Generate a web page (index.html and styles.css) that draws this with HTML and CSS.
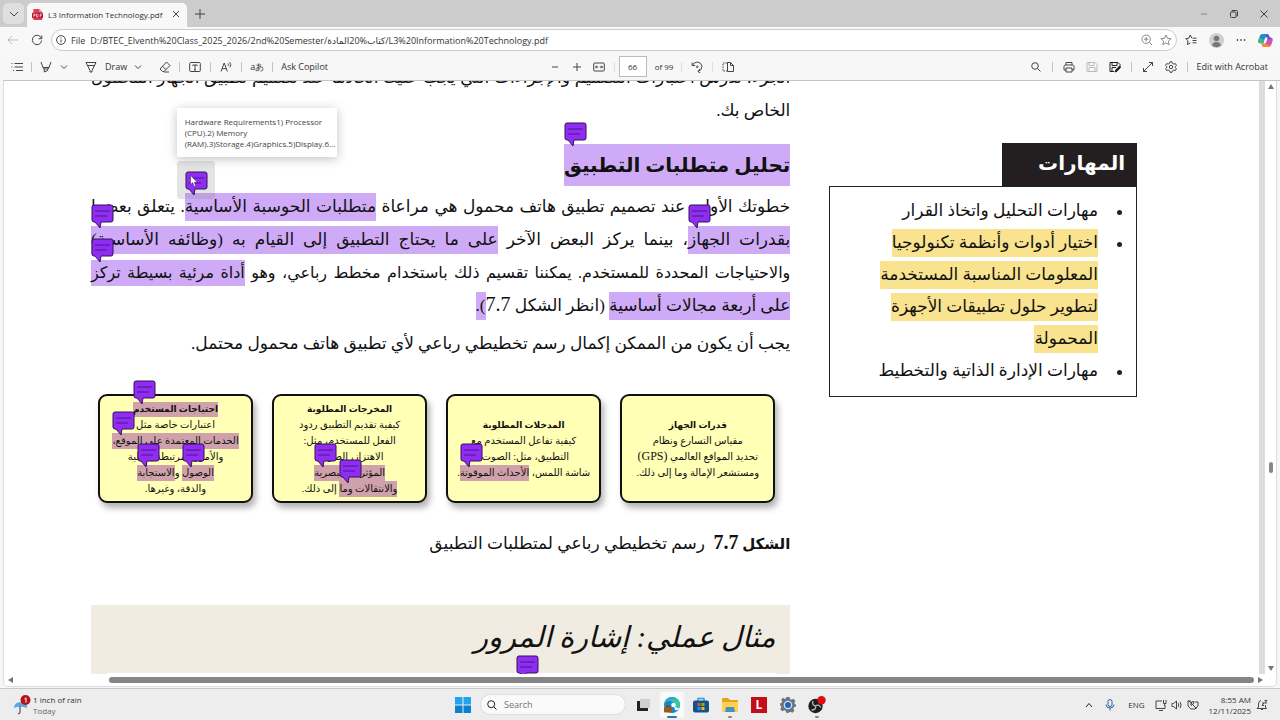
FILE: index.html
```html
<!DOCTYPE html>
<html lang="en">
<head>
<meta charset="utf-8">
<title>L3 Information Technology.pdf</title>
<link rel="stylesheet" href="styles.css">
</head>
<body>
<svg class="defs" aria-hidden="true">
  <symbol id="note" viewBox="0 0 23 26">
    <path d="M3 1h17q2 0 2 2v13q0 2-2 2H10l-1 6-5-6H3q-2 0-2-2V3q0-2 2-2z" fill="#8f2df0" stroke="#35105e" stroke-width="1"/>
    <path d="M4 7h15M4 12h12" stroke="#4d1590" stroke-width="1"/>
  </symbol>
  <symbol id="chev" viewBox="0 0 8 8"><path d="M1 2.5l3 3 3-3"/></symbol>
</svg>
<div class="window">
  <header class="tabs">
    <button class="tabmenu" aria-label="Tab actions"><svg class="ic s10" viewBox="0 0 10 10"><path d="M1 3l4 4 4-4"/></svg></button>
    <div class="tab">
      <svg class="pdficon" viewBox="0 0 12 12"><path d="M1.500 0h6.500l3 3v9h-9.500z" fill="#d94452"/><path d="M8 0l3 3H8z" fill="#f3b6bb"/><rect y="4" width="12" height="6" rx="1" fill="#b8132a"/><path d="M2 9V5.500h1.500v1.500H2M5 5.500V9q2 0 2-1.700T5 5.500M9 9V5.500h2M9 7h1.500" fill="none" stroke="#fff" stroke-width=".7"/></svg>
      <span class="tabtitle">L3 Information Technology.pdf</span>
      <button aria-label="Close tab"><svg class="ic s8" viewBox="0 0 8 8"><path d="M1 1l6 6M7 1L1 7"/></svg></button>
    </div>
    <button class="newtab" aria-label="New tab"><svg class="ic s10" viewBox="0 0 10 10"><path d="M5 0v10M0 5h10"/></svg></button>
    <div class="winbtns">
      <button aria-label="Minimize"><svg class="ic s8 dim" viewBox="0 0 8 8"><path d="M1 4h6"/></svg></button>
      <button aria-label="Restore"><svg class="ic s8" viewBox="0 0 8 8"><rect x=".5" y="2" width="5.500" height="5.500" rx="1"/><path d="M2 2V.5h4.500q1 0 1 1V6H6"/></svg></button>
      <button aria-label="Close"><svg class="ic s8" viewBox="0 0 8 8"><path d="M.5.5l7 7M7.500.5l-7 7"/></svg></button>
    </div>
  </header>

  <div class="address">
    <button aria-label="Back"><svg class="ic s12 off" viewBox="0 0 12 12"><path d="M11 6H1M5 2L1 6l4 4"/></svg></button>
    <button aria-label="Refresh"><svg class="ic s12" viewBox="0 0 12 12"><path d="M10.500 4.500A4.700 4.700 0 1 0 10.700 6.500M10.800 1.500v3.200H7.500"/></svg></button>
    <div class="omni">
      <svg class="ic s10" viewBox="0 0 10 10"><circle cx="5" cy="5" r="4.400"/><path d="M5 4.500v3M5 2.500v1"/></svg>
      <label for="url">File</label>
      <input id="url" type="text" dir="ltr" value="D:/BTEC_Elventh%20Class_2025_2026/2nd%20Semester/كتاب%20المادة/L3%20Information%20Technology.pdf">
      <button aria-label="Zoom"><svg class="ic s12 soft" viewBox="0 0 12 12"><circle cx="5.200" cy="5.200" r="4.200"/><path d="M8.300 8.300L11 11M5.200 3v4.400M3 5.200h4.400"/></svg></button>
      <button aria-label="Add to favorites"><svg class="ic s12 soft" viewBox="0 0 12 12"><path d="M6 1l1.500 3.300 3.600.4-2.700 2.400.8 3.600L6 8.900l-3.200 1.800.8-3.600L.9 4.700l3.600-.4z"/></svg></button>
    </div>
    <button aria-label="Favorites"><svg class="ic s12" viewBox="0 0 12 12"><path d="M7.500 4.200L6.800 4 5.200 1 3.800 4.200.8 4.600l2.200 2.200-.6 3.800 3-1.700M8 4.200h3.500M7.500 6.500h4M7.500 8.800h4"/></svg></button>
    <button aria-label="Profile"><svg class="s14" viewBox="0 0 14 14"><circle cx="7" cy="7" r="7" fill="#cfcfcf"/><circle cx="7" cy="5.200" r="2.600" fill="#777"/><path d="M3 12q0-3.700 4-3.700T11 12q-4 2.500-8 0z" fill="#777"/></svg></button>
    <button aria-label="More"><svg class="s10" viewBox="0 0 10 10"><circle cx="1.500" cy="5" r=".8"/><circle cx="5" cy="5" r=".8"/><circle cx="8.500" cy="5" r=".8"/></svg></button>
    <button aria-label="Copilot"><svg class="s14" viewBox="0 0 14 14"><path d="M4 1h4.500q1.200 0 1.700 1.500L10.800 4H8q-1.300 0-1.700 1.300L5 9.500H2Q-.3 9.500.3 7L1.700 2.700Q2.300 1 4 1z" fill="#1f8ad6"/><path d="M.3 7l1-3.300 4.500 3L5 9.500H2Q-.3 9.500.3 7z" fill="#3dbb7a"/><path d="M10 13H5.500q-1.200 0-1.700-1.500L3.200 10H6q1.300 0 1.700-1.300L9 4.500h3q2.300 0 1.700 2.500l-1.400 4.300Q11.700 13 10 13z" fill="#d24fb4"/><path d="M10 13H5.500q-1.200 0-1.700-1.500L3.200 10H6l6 1.500Q11.500 13 10 13z" fill="#f5883a"/><path d="M8 1.200q1.700 0 2.200 1.300l.6 1.500L13.500 5 9 6V4H7.500z" fill="#5a4fd0"/></svg></button>
  </div>

  <div class="pdfbar">
    <div class="group">
      <button aria-label="Contents"><svg class="ic s12" viewBox="0 0 12 12"><path d="M3.500 2.500H12M3.500 6H12M5 9.500h7M.5 2.500h1M.5 6h1M2 9.500h1"/></svg></button>
      <i class="sep"></i>
      <button aria-label="Highlight"><svg class="ic s12" viewBox="0 0 12 12"><path d="M1 1l2 5.500h6L11 1M3 6.500L4 8h4l1-1.500M4.300 8v3l3.400-1.500V8"/></svg></button>
      <button class="narrow" aria-label="Highlight colors"><svg class="ic s8"><use href="#chev"/></svg></button>
      <button class="wide" aria-label="Draw tool"><svg class="ic s12" viewBox="0 0 12 12"><path d="M1 1.500h10L7 9.500v1.500H5V9.500zM2.500 4.500h7"/></svg></button>
      <button class="text">Draw</button>
      <button class="narrow" aria-label="Draw options"><svg class="ic s8"><use href="#chev"/></svg></button>
      <button class="wide" aria-label="Erase"><svg class="ic s12" viewBox="0 0 12 12"><path d="M7.500 1l3.500 3.500-6 6H3.500L1 8zM3.500 5.200L7 8.700M5 11h5"/></svg></button>
      <span class="group tools">
      <i class="sep"></i>
      <button aria-label="Add text"><svg class="ic s12" viewBox="0 0 12 12"><rect x=".7" y="1.500" width="10.600" height="9" rx="1"/><path d="M3.800 4.800V4h4.400v.8M6 4v5M5 9h2"/></svg></button>
      <i class="sep"></i>
      <button aria-label="Read aloud"><svg class="ic s12" viewBox="0 0 12 12"><path d="M1 10.500L4.200 2l3.200 8.500M2 7.700h4.400M8 2.500q1 1 0 2.500M9.700 1.200q2 2.200.3 5"/></svg></button>
      <i class="sep"></i>
      <button class="text" aria-label="Translate">aあ</button>
      <i class="sep"></i>
      <button class="text">Ask Copilot</button>
      </span>
    </div>
    <div class="group mid">
      <button aria-label="Zoom out"><svg class="ic s8" viewBox="0 0 8 8"><path d="M1 4h6"/></svg></button>
      <button aria-label="Zoom in"><svg class="ic s8" viewBox="0 0 8 8"><path d="M0 4h8M4 0v8"/></svg></button>
      <button aria-label="Fit to width"><svg class="ic s12" viewBox="0 0 12 12"><rect x=".7" y="2" width="10.600" height="8" rx="1"/><path d="M2.500 6h2.700M9.500 6H6.800M3.700 4.700L2.500 6l1.200 1.300M8.300 4.700L9.500 6 8.300 7.300"/></svg></button>
      <i class="sep faint"></i>
      <input type="text" value="66" aria-label="Page number">
      <span>of 99</span>
      <i class="sep faint"></i>
      <button aria-label="Rotate"><svg class="ic s12" viewBox="0 0 12 12"><path d="M1.200 1.500v3h3M1.200 4.500Q3 1 6.500 1q4 .5 4.500 4.500-.3 4-4 5M8.800 8L7 10.500 9.500 12"/><circle cx="6.300" cy="5.800" r=".8"/></svg></button>
      <i class="sep faint"></i>
      <button aria-label="Page view"><svg class="ic s12" viewBox="0 0 12 12"><path d="M5 2H1v8h4" stroke-dasharray="1.500 1"/><path d="M5.500 1.500v9h6V4.500l-3-3zM8.500 1.500v3h3"/></svg></button>
    </div>
    <div class="group end">
      <button aria-label="Find"><svg class="ic s10" viewBox="0 0 10 10"><circle cx="4" cy="4" r="3.300"/><path d="M6.500 6.500l3 3"/></svg></button>
      <i class="sep"></i>
      <button aria-label="Print"><svg class="ic s12" viewBox="0 0 12 12"><path d="M3 4V1.500h6V4M3 9H1V5.500Q1 4 2.500 4h7Q11 4 11 5.500V9H9M3 7h6v4H3z"/></svg></button>
      <button aria-label="Save"><svg class="ic s12 off" viewBox="0 0 12 12"><path d="M1 1.500h8l2 2v7H1zM3 1.500v3h5v-3M3 10.500v-4h6v4"/></svg></button>
      <button aria-label="Save as"><svg class="ic s12 strong" viewBox="0 0 12 12"><path d="M5 10.500H1v-9h8l2 2V5M3 1.500v3h5v-3M3 10.500v-4h4"/><path d="M6 11l.7-2L10.500 5l1.200 1.200L8 10.300z" fill="#222"/></svg></button>
      <i class="sep"></i>
      <button aria-label="Full screen"><svg class="ic s12" viewBox="0 0 12 12"><path d="M1.500 10.500l9-9M7 1.500h3.500V5M1.500 7v3.500H5"/></svg></button>
      <button aria-label="Settings"><svg class="ic s12" viewBox="0 0 12 12"><path d="M5 .8h2l.4 1.500 1.500.8L10.400 2.600l1 1.800L10.300 5.500v1.200l1.100 1-1 1.800L8.900 9l-1.500.8L7 11.300H5l-.4-1.500L3.100 9l-1.500.5-1-1.800 1.100-1V5.500L.6 4.400l1-1.800 1.500.5 1.500-.8z"/><circle cx="6" cy="6" r="1.700"/></svg></button>
      <i class="sep"></i>
      <button class="text">Edit with Acrobat</button>
    </div>
  </div>

  <main class="viewer">
    <div class="sheet" lang="ar" dir="rtl">
      <aside class="skills">
        <h2>المهارات</h2>
        <ul>
          <li>مهارات التحليل واتخاذ القرار</li>
          <li><mark>اختيار أدوات وأنظمة تكنولوجيا</mark><br><mark>المعلومات المناسبة المستخدمة</mark><br><mark>لتطوير حلول تطبيقات الأجهزة</mark><br><mark>المحمولة</mark></li>
          <li>مهارات الإدارة الذاتية والتخطيط</li>
        </ul>
      </aside>
      <article class="body">
        <p class="intro"><span class="line full">الجزء، تدرس اعتبارات التصميم والإجراءات التي يجب عليك اتخاذها عند تصميم تطبيق الجهاز المحمول</span><span class="line">الخاص بك.</span></p>
        <h1><mark>تحليل متطلبات التطبيق<svg class="pin"><use href="#note"/></svg></mark></h1>
        <p>
          <span class="line full">خطوتك الأولى عند تصميم تطبيق هاتف محمول هي مراعاة <mark>متطلبات الحوسبة الأساسية<span class="hover"></span><svg class="pin"><use href="#note"/></svg><svg class="cursor" viewBox="0 0 8 12"><path d="M.5.5v9l2.200-1.800L4 11.500l1.700-.7-1.400-3.500h3z" fill="#fff" stroke="#3b1466" stroke-width=".5"/></svg><span class="tip" dir="ltr" lang="en" role="tooltip">Hardware Requirements1) Processor<br>(CPU).2) Memory<br>(RAM).3)Storage.4)Graphics.5)Display.6...</span></mark>. يتعلق بعضها</span>
          <span class="line full"><mark>بقدرات الجهاز<svg class="pin"><use href="#note"/></svg></mark>، بينما يركز البعض الآخر <mark>على ما يحتاج التطبيق إلى القيام به (وظائفه الأساسية)<svg class="pin"><use href="#note"/></svg></mark></span>
          <span class="line full tight">والاحتياجات المحددة للمستخدم. يمكننا تقسيم ذلك باستخدام مخطط رباعي، وهو <mark>أداة مرئية بسيطة تركز<svg class="pin"><use href="#note"/></svg></mark></span>
          <span class="line"><mark>على أربعة مجالات أساسية</mark> (انظر الشكل <span class="num">7.7</span><mark>).</mark></span>
        </p>
        <p class="last"><span class="line">يجب أن يكون من الممكن إكمال رسم تخطيطي رباعي لأي تطبيق هاتف محمول محتمل.</span></p>
        <figure>
          <div class="cards">
            <section><h3>قدرات الجهاز</h3><p>مقياس التسارع ونظام<br>تحديد المواقع العالمي <span class="abbr">(GPS)</span><br>ومستشعر الإمالة وما إلى ذلك.</p></section>
            <section><h3>المدخلات المطلوبة</h3><p>كيفية تفاعل المستخدم مع<br>التطبيق، مثل: الصوت،<br>شاشة اللمس، <mark>الأحداث الموقوتة<svg class="pin"><use href="#note"/></svg></mark>.</p></section>
            <section><h3>المخرجات المطلوبة</h3><p>كيفية تقديم التطبيق ردود<br>الفعل للمستخدم، مثل:<br>الاهتزاز، الصوت،<br><mark>المؤثرات البصرية<svg class="pin"><use href="#note"/></svg></mark><br><mark>والانتقالات وما<svg class="pin"><use href="#note"/></svg></mark> إلى ذلك.</p></section>
            <section><h3><mark>احتياجات المستخدم<svg class="pin"><use href="#note"/></svg></mark></h3><p>اعتبارات خاصة مثل<br><mark>الخدمات المعتمدة على الموقع،<svg class="pin"><use href="#note"/></svg></mark><br>والأمور المرتبطة بقابلية<br><mark>الوصول<svg class="pin"><use href="#note"/></svg></mark> و<mark>الاستجابة<svg class="pin"><use href="#note"/></svg></mark><br>والدقة، وغيرها.</p></section>
          </div>
          <figcaption><b>الشكل <span class="num">7.7</span></b>&nbsp; رسم تخطيطي رباعي لمتطلبات التطبيق</figcaption>
        </figure>
        <section class="example">
          <h2>مثال عملي: إشارة المرور</h2>
          <div class="inner"></div>
          <svg class="pin"><use href="#note"/></svg>
        </section>
      </article>
    </div>
    <div class="vbar"><i class="edge"></i><div class="track"><svg viewBox="0 0 6 5"><path d="M0 5l3-5 3 5z"/></svg><i class="thumb"></i><svg viewBox="0 0 6 5"><path d="M0 0l3 5 3-5z"/></svg></div></div>
    <div class="hbar"><svg viewBox="0 0 5 6"><path d="M5 0L0 3l5 3z"/></svg><i class="thumb"></i><svg viewBox="0 0 5 6"><path d="M0 0l5 3-5 3z"/></svg></div>
  </main>

  <footer class="taskbar">
    <button class="weather">
      <svg viewBox="0 0 18 20"><path d="M1 13Q1 7 8 7t6 6q-7-3-13 0z" fill="#5aa9e6"/><path d="M7 11v6q0 2-2 1.500" fill="none" stroke="#555" stroke-width="1.200"/><circle cx="12.500" cy="5" r="5" fill="#b3141c"/><path d="M11.500 4l1.500-1.200V7.500" fill="none" stroke="#fff"/></svg>
      <span>1 inch of rain<small>Today</small></span>
    </button>
    <div class="apps">
      <button aria-label="Start"><svg viewBox="0 0 16 16"><path d="M0 0h7.500v7.500H0zM8.500 0H16v7.500H8.500z" fill="#22a5e8"/><path d="M0 8.500h7.500V16H0zM8.500 8.500H16V16H8.500z" fill="#0a82cf"/></svg></button>
      <label class="search"><svg class="ic s10 strong" viewBox="0 0 10 10"><circle cx="4.200" cy="4.200" r="3.500"/><path d="M6.800 6.800l2.700 2.700"/></svg><input type="text" placeholder="Search" aria-label="Search"></label>
      <button aria-label="Task view"><svg viewBox="0 0 16 16"><path d="M5 2h10v9H5z" fill="#cfcfcf"/><path d="M2 4h3v7h8v3H2z" fill="#222"/></svg></button>
      <button class="active" aria-label="Edge"><svg viewBox="0 0 16 16"><circle cx="8" cy="8" r="8" fill="#1287c9"/><path d="M1 5Q4-.5 9 .2q6 .8 7 6.800 0 4-4.500 4Q9 10.500 10 8 9.500 4 5 4 2 4 1 6z" fill="#3bc8a0"/><path d="M1 5Q4-.5 9 .2q3 .5 5 3Q7 1 1 5z" fill="#27a9e0"/><circle cx="9.500" cy="8" r="2.300" fill="#fff"/><path d="M10 9q2 2.500 5.500 1.500Q14 14 11 13z" fill="#eaf5fb"/><rect x="0" y="10" width="8" height="5.500" rx="1" fill="#9a5a1c"/><path d="M2.500 10V9h3v1" fill="none" stroke="#6b3a0d"/></svg></button>
      <button aria-label="Store"><svg viewBox="0 0 16 16"><path d="M5 4V1.500h6V4" fill="none" stroke="#2c9ed8" stroke-width="1.400"/><rect y="3.500" width="16" height="12" rx="2" fill="#17508a"/><path d="M4.500 6h3v3h-3z" fill="#f25022"/><path d="M8.500 6h3v3h-3z" fill="#7fba00"/><path d="M4.500 10h3v3h-3z" fill="#00a4ef"/><path d="M8.500 10h3v3h-3z" fill="#ffb900"/></svg></button>
      <button class="open" aria-label="File Explorer"><svg viewBox="0 0 16 16"><path d="M0 2q0-1 1-1h5l2 2h7q1 0 1 1v10H0z" fill="#e5a51b"/><path d="M0 5h16v10H0z" fill="#ffd152"/><path d="M4 10h8l1 5H3z" fill="#4a8fc0"/></svg></button>
      <button class="tile" aria-label="Lexicon">L</button>
      <button aria-label="Settings"><svg viewBox="0 0 16 16"><path d="M6.500 0h3l.6 2.200 1.300.6 2-1 2 2-1 2 .4 1.200 1.200.5v2l-2 .8-.6 1.400 1 2-2 2-2-1-1.300.6L8.500 16h-2l-.9-2.200-1.300-.6-2 1-2-2 1-2-.6-1.400L0 8V6.500l1.600-.8L2 4.400l-.8-2L3 .8l2.200 1.500z" fill="#6b7480"/><circle cx="8" cy="8" r="4.300" fill="#cfe3f5"/><circle cx="8" cy="8" r="3" fill="#1c66b8"/></svg></button>
      <button class="open" aria-label="Recorder"><svg class="rec" viewBox="0 0 18 18"><circle cx="7.500" cy="10" r="7.200" fill="#1c1c1c"/><path d="M7.500 10q-4-1-2.500-5M7.500 10q3-2.500 5.500 1.500M7.500 10q1 4-4 4" fill="none" stroke="#bbb" stroke-width="1.300"/><circle cx="13.500" cy="4.200" r="4.200" fill="#e00b12"/></svg></button>
    </div>
    <div class="tray">
      <button class="more" aria-label="Hidden icons"><svg class="ic s8 strong" viewBox="0 0 8 8"><path d="M1 6l3-3.500L7 6"/></svg></button>
      <button class="rec-on" aria-label="Microphone"><svg class="s12 mic" viewBox="0 0 12 12"><rect x="4" y=".5" width="4" height="7" rx="2"/><path d="M2 5.500q0 3.500 4 3.500t4-3.500M6 9v2.500"/></svg></button>
      <span class="lang">ENG</span>
      <button aria-label="Network"><svg class="ic s12" viewBox="0 0 12 12"><path d="M7 2H1v7.500h9V6.500M4 11.500h4M8.500 1v3.500h2.500V1M9.700 4.500V7"/></svg></button>
      <button aria-label="Volume"><svg class="ic s12" viewBox="0 0 12 12"><path d="M1 4.500h1.500L5.500 2v8L2.500 7.500H1zM7.200 4.200q1.200 1.800 0 3.600M9 2.800q2.300 3.200 0 6.400"/></svg></button>
      <button aria-label="Battery"><svg class="ic s12" viewBox="0 0 12 12"><path d="M4 2H1v5l3 3h4l3-3V3H8M1.500 1.500l8 8M4 5q0-3 3-2.500 0 3-3 4z"/></svg></button>
      <time class="clock">8:55 AM<br>12/11/2025</time>
      <button aria-label="Notifications"><svg class="ic s12" viewBox="0 0 12 12"><path d="M1 9.500h9.500L9.500 8V6M5 1.500Q2.500 2 2.500 5v3L1 9.500M4.500 9.500q1.500 3 3 0M6 4h2L6 6.500h2M8.500 1.500h2.500L8.500 4H11"/></svg></button>
    </div>
  </footer>
</div>
</body>
</html>
```
FILE: styles.css
```css
* { box-sizing: border-box; }
body { margin: 0; font-family: "Open Sans", "Noto Sans", "DejaVu Sans", sans-serif; font-size: 9px; color: #333; background: #f7f7f7; }
button { border: 0; background: none; padding: 0; font: inherit; color: inherit; display: flex; align-items: center; justify-content: center; }
input { border: 0; background: none; padding: 0; font: inherit; color: inherit; outline: 0; min-width: 0; }
h1, h2, h3, p, ul, figure { margin: 0; padding: 0; }
mark { color: inherit; position: relative; }
svg { flex: none; display: block; }
.defs { position: absolute; width: 0; height: 0; }
.window { height: 100vh; display: flex; flex-direction: column; overflow: hidden; }

.ic { fill: none; stroke: #444; stroke-width: 1; }
.s8 { width: 8px; height: 8px; }
.s10 { width: 10px; height: 10px; }
.s12 { width: 12px; height: 12px; }
.s14 { width: 15px; height: 15px; }
.dim, .soft { stroke: #888; }
.off { stroke: #bbb; }
.strong { stroke: #222; }

.tabs { height: 27px; background: #ccc; display: flex; align-items: stretch; padding-left: 3px; }
.tabmenu { width: 21px; height: 21px; margin: 3px 3px 0 0; background: #dfdfdf; border-radius: 5px; }
.tab { width: 160px; margin-top: 3px; padding: 0 7px 2px 5px; background: #f8f8f8; border-radius: 5px 5px 0 0; display: flex; align-items: center; gap: 5px; }
.pdficon { width: 11px; height: 11px; }
.tabtitle { flex: 1; font-size: 8px; white-space: nowrap; }
.newtab { width: 26px; }
.winbtns { margin-left: auto; display: flex; gap: 22px; padding-right: 12px; }

.address { height: 26px; display: flex; align-items: center; padding: 0 7px; gap: 12px; background: #f8f8f8; }
.omni { flex: 1; height: 22px; margin-left: -4px; margin-right: -4px; border: 1px solid #ccc; border-radius: 11px; background: #fff; display: flex; align-items: center; gap: 5px; padding: 0 3px 0 4px; }
.omni input { flex: 1; font-size: 9px; }
.omni button { width: 14px; }

.pdfbar { height: 28px; display: grid; grid-template-columns: 1fr auto 1fr; align-items: center; border-bottom: 1px solid #c4c4c4; background: #f7f7f7; margin-left: 3px; }
.group { display: flex; align-items: center; gap: 7px; padding-left: 7px; }
.group button { width: 14px; height: 20px; }
.group .narrow { width: 8px; }
.group .wide { margin-left: 9px; }
.group .text { width: auto; white-space: nowrap; }
.tools { gap: 8px; padding: 0; }
.sep { width: 1px; height: 10px; background: #c4c4c4; }
.faint { background: #dedede; }
.mid { gap: 8px; padding: 0; }
.mid input { width: 28px; height: 21px; border: 1px solid #bbb; background: #fff; text-align: center; font-size: 8px; margin-left: -4px; }
.mid span { font-size: 8px; }
.end { justify-content: flex-end; gap: 9px; padding-right: 12px; }

.viewer { flex: 1; min-height: 0; display: grid; grid-template-columns: 1fr 17px; grid-template-rows: 1fr 12px; margin: 0 3px; border: 1px solid #ddd; border-top: 0; border-radius: 0 0 5px 5px; background: #fff; }
.sheet { overflow: hidden; min-height: 0; display: grid; grid-template-columns: minmax(0, 308fr) minmax(0, 700fr); column-gap: 39px; padding: 0 122px 0 87px; align-items: start; font-family: "Liberation Serif", "DejaVu Sans", serif; font-size: 17px; color: #111; line-height: 33px; }

.skills { padding-top: 62px; line-height: 32px; }
.skills h2 { width: 135px; height: 43px; line-height: 41px; padding-right: 12px; background: #231f20; color: #fff; font-size: 20px; }
.skills ul { border: 1px solid #222; padding: 8px 38px 9px 0; list-style: none; white-space: nowrap; }
.skills li { position: relative; }
.skills li::before { content: ""; position: absolute; right: -24px; top: 15px; width: 5px; height: 5px; border-radius: 50%; background: #222; }
.skills mark { background: #f9e38f; padding: 4px 0 5px; }

.body { margin-top: -20px; white-space: nowrap; }
.line { display: block; height: 33px; }
.full { text-align: justify; text-align-last: justify; white-space: normal; }
.tight { font-size: 16px; }
.num { font-size: 20px; line-height: 20px; }
.body mark { background: #cfabf7; padding: 4px 0 5px; }
.body h1 { font-size: 20px; line-height: 42px; margin: 17px 0 4px; }
.body h1 mark { padding: 10px 0; }
.last { margin-top: 5px; }
.pin { position: absolute; left: 0; top: -22px; width: 23px; height: 26px; z-index: 2; }
.hover { position: absolute; left: -8px; top: -32px; width: 38px; height: 38px; background: rgba(130,130,130,.22); border-radius: 3px; z-index: 1; }
.cursor { position: absolute; left: 5px; top: -18px; width: 8px; height: 12px; z-index: 3; }
.tip { position: absolute; left: -8px; top: -85px; width: 160px; padding: 8px; background: #fff; box-shadow: 0 2px 10px rgba(0,0,0,.25); font-family: "Open Sans", "Noto Sans", sans-serif; font-size: 8px; line-height: 11px; text-align: left; text-align-last: left; color: #444; white-space: nowrap; z-index: 3; }

.cards { display: flex; justify-content: space-between; padding: 34px 15px 0 7px; }
.cards section { width: 155px; height: 109px; border: 2px solid #111; border-radius: 9px; background: #ffffb5; box-shadow: 3px 5px 6px rgba(0,0,0,.3); display: flex; flex-direction: column; justify-content: center; text-align: center; font-size: 10px; line-height: 16px; }
.cards h3 { font-size: 9px; }
.cards .abbr { font-size: 12px; line-height: 12px; }
.cards mark { background: #cfa1ab; padding: 2px 0 3px; }
figcaption { margin-top: 24px; }
figcaption b { font-size: 15px; }
.example { position: relative; margin-top: 44px; padding: 0 14px 0 16px; height: 100px; background: #f0ece1; }
.example h2 { font-size: 29px; font-weight: 400; font-style: italic; line-height: 64px; height: 68px; }
.example .inner { background: #fff; height: 32px; }
.example .pin { left: 425px; top: 50px; }

.vbar { display: flex; }
.edge { width: 6px; background: #ddd; }
.track { flex: 1; display: flex; flex-direction: column; align-items: center; justify-content: space-between; padding: 3px 0; }
.track svg { width: 6px; height: 5px; fill: #777; }
.track .thumb { width: 4px; height: 11px; margin-top: 373px; margin-bottom: auto; border-radius: 2px; background: #888; }
.hbar { grid-column: 1 / -1; display: flex; align-items: center; padding: 0 13px 1px 4px; }
.hbar svg { width: 5px; height: 6px; fill: #777; }
.hbar .thumb { flex: 1; height: 6px; margin: 0 4px 0 96px; border-radius: 3px; background: #858585; }

.taskbar { height: 32px; margin-top: 1px; border-top: 1px solid #c8c8c8; background: #ededed; display: grid; grid-template-columns: 1fr auto 1fr; align-items: center; }
.weather { justify-content: flex-start; gap: 2px; padding-left: 13px; text-align: left; font-size: 8px; line-height: 11px; }
.weather svg { width: 18px; height: 20px; }
.weather small { display: block; font-size: 8px; color: #666; }
.apps { display: flex; align-items: center; gap: 5px; }
.apps button { width: 24px; height: 26px; position: relative; }
.apps svg { width: 16px; height: 16px; }
.apps .rec { width: 18px; height: 18px; }
.apps .active { background: #fafafa; border-radius: 3px; }
.apps .active::after, .apps .open::after { content: ""; position: absolute; bottom: 0; width: 4px; height: 2px; border-radius: 1px; background: #888; }
.apps .active::after { width: 10px; background: #2577b5; }
.apps .search { width: 146px; height: 21px; border: 1px solid #ddd; border-radius: 11px; background: #fafafa; display: flex; align-items: center; gap: 7px; padding: 0 6px; }
.apps .search svg { width: 10px; height: 10px; }
.search input { flex: 1; }
.apps .tile::before { content: ""; position: absolute; left: 4px; top: 5px; width: 16px; height: 16px; background: #c40d18; z-index: -1; }
.apps .tile { color: #fff; font-weight: 700; font-size: 12px; z-index: 0; }
.tray { display: flex; align-items: center; justify-content: flex-end; gap: 4px; padding-right: 12px; }
.mic { fill: none; stroke: #2f62a8; }
.rec-on { margin-right: 5px; }
.lang { font-size: 8px; margin: 0 6px 0 3px; }
.tray .more { margin-right: 7px; }
.clock { font-size: 8px; line-height: 11px; text-align: right; margin: 0 1px 0 6px; white-space: nowrap; }
```
